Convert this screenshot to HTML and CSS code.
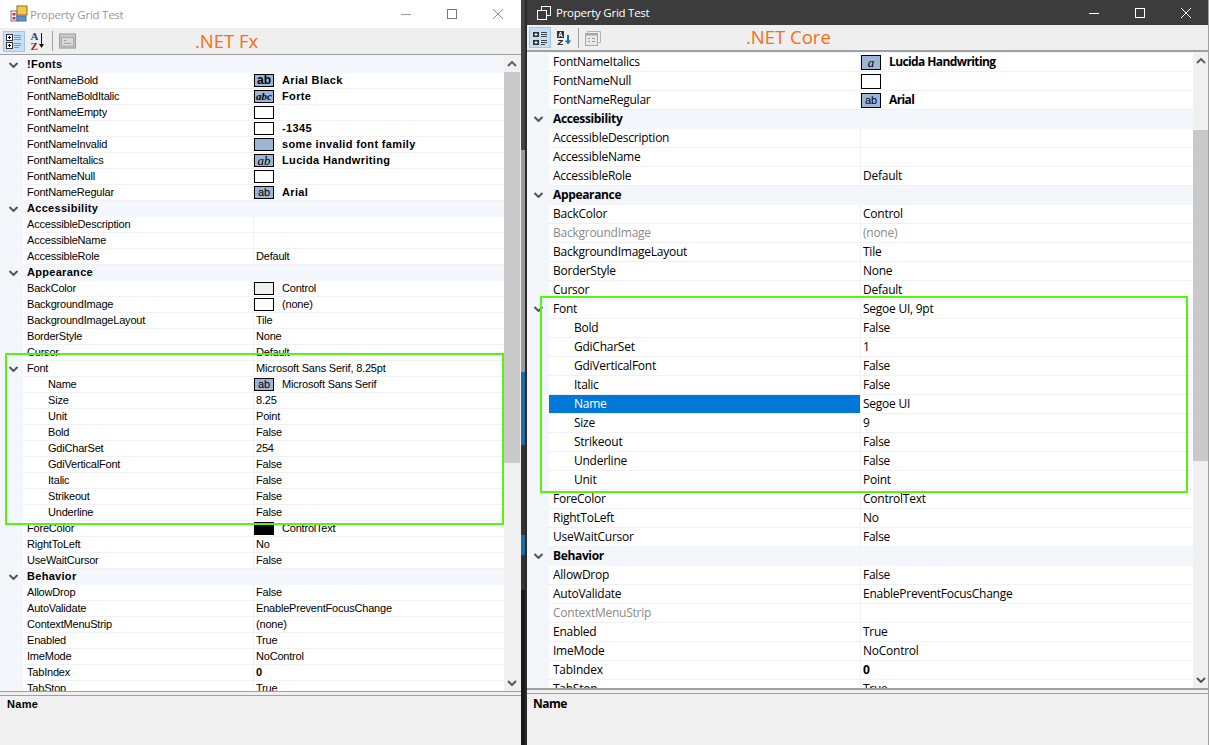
FILE: index.html
```html
<!DOCTYPE html>
<html lang="en">
<head>
<meta charset="UTF-8">
<title>Property Grid Test</title>
<link rel="stylesheet" href="styles.css">
</head>
<body>

<svg class="defs" width="0" height="0">
  <symbol id="chev" viewBox="0 0 10 6"><path d="M1 1l4 4 4-4" fill="none" stroke="#555" stroke-width="2"/></symbol>
  <symbol id="chev-up" viewBox="0 0 10 6"><path d="M1 5l4-4 4 4" fill="none" stroke="#606060" stroke-width="2"/></symbol>
</svg>

<!-- left window -->
<div class="window fx">
  <div class="titlebar">
    <svg class="app-icon" width="18" height="18" viewBox="0 0 18 18">
      <rect x="1" y="6" width="6" height="10" fill="#f4f4f4" stroke="#777"/>
      <rect x="2.500" y="8" width="3" height="2.500" fill="#c43a30"/>
      <rect x="2.500" y="12" width="3" height="2.500" fill="#c43a30"/>
      <rect x="7" y="1" width="10" height="9" fill="#f2c94c" stroke="#8a6d1c"/>
      <rect x="7" y="11" width="9" height="5" fill="#5b8fd6" stroke="#4a6a9c"/>
    </svg>
    <span class="title">Property Grid Test</span>
    <div class="caption">
      <svg width="12" height="12" viewBox="0 0 12 12"><path d="M1 6.500h10" stroke="#999"/></svg>
      <svg width="12" height="12" viewBox="0 0 12 12"><rect x="1.500" y="1.500" width="9" height="9" fill="none" stroke="#777"/></svg>
      <svg width="12" height="12" viewBox="0 0 12 12"><path d="M1 1l10 10M11 1L1 11" stroke="#888"/></svg>
    </div>
  </div>
  <div class="toolbar">
    <span class="tool on">
      <svg width="18" height="18" viewBox="0 0 18 18">
        <rect x="1.500" y="2.500" width="6" height="6" fill="#fff" stroke="#333"/><path d="M3 5.500h3M4.500 4v3" stroke="#000"/>
        <rect x="1.500" y="10.500" width="6" height="6" fill="#fff" stroke="#333"/><path d="M3 13.500h3M4.500 12v3" stroke="#000"/>
        <path d="M9 3.500h7M9 5.500h7M9 7.500h7M9 11.500h7M9 13.500h7M9 15.500h5" stroke="#8a93a0"/>
      </svg>
    </span>
    <span class="tool az">
      <span class="az-letters"><b class="a">A</b><b class="z">Z</b></span>
      <svg width="7" height="18" viewBox="0 0 7 18"><path d="M3.500 1v13" stroke="#111"/><path d="M1 12h5l-2.500 4z" fill="#111"/></svg>
    </span>
    <span class="sep"></span>
    <svg class="pages" width="17" height="16" viewBox="0 0 18 16">
      <rect x="0.500" y="0.500" width="17" height="15" fill="#c9c9c9" stroke="#999"/>
      <rect x="2.500" y="4.500" width="13" height="9" fill="#dcdcdc" stroke="#a5a5a5"/>
      <path d="M5 7.500h3M5 10.500h8" stroke="#999"/>
    </svg>
    <span class="tag">.NET Fx</span>
  </div>
  <div class="body">
    <div class="grid">
      <div class="row cat"><svg class="chev"><use href="#chev"/></svg><span class="name">!Fonts</span></div>
      <div class="row"><span class="name">FontNameBold</span><span class="val strong"><i class="sw blue arial-black">ab</i>Arial Black</span></div>
      <div class="row"><span class="name">FontNameBoldItalic</span><span class="val strong"><i class="sw blue forte">abc</i>Forte</span></div>
      <div class="row"><span class="name">FontNameEmpty</span><span class="val"><i class="sw"></i></span></div>
      <div class="row"><span class="name">FontNameInt</span><span class="val strong"><i class="sw"></i>-1345</span></div>
      <div class="row"><span class="name">FontNameInvalid</span><span class="val strong"><i class="sw blue"></i>some invalid font family</span></div>
      <div class="row"><span class="name">FontNameItalics</span><span class="val strong"><i class="sw blue script">ab</i>Lucida Handwriting</span></div>
      <div class="row"><span class="name">FontNameNull</span><span class="val"><i class="sw"></i></span></div>
      <div class="row"><span class="name">FontNameRegular</span><span class="val strong"><i class="sw blue">ab</i>Arial</span></div>
      <div class="row cat"><svg class="chev"><use href="#chev"/></svg><span class="name">Accessibility</span></div>
      <div class="row"><span class="name">AccessibleDescription</span><span class="val"></span></div>
      <div class="row"><span class="name">AccessibleName</span><span class="val"></span></div>
      <div class="row"><span class="name">AccessibleRole</span><span class="val">Default</span></div>
      <div class="row cat"><svg class="chev"><use href="#chev"/></svg><span class="name">Appearance</span></div>
      <div class="row"><span class="name">BackColor</span><span class="val"><i class="sw control"></i>Control</span></div>
      <div class="row"><span class="name">BackgroundImage</span><span class="val"><i class="sw"></i>(none)</span></div>
      <div class="row"><span class="name">BackgroundImageLayout</span><span class="val">Tile</span></div>
      <div class="row"><span class="name">BorderStyle</span><span class="val">None</span></div>
      <div class="row"><span class="name">Cursor</span><span class="val">Default</span></div>
      <div class="row"><svg class="chev open"><use href="#chev"/></svg><span class="name">Font</span><span class="val">Microsoft Sans Serif, 8.25pt</span></div>
      <div class="row sub"><span class="name">Name</span><span class="val"><i class="sw blue">ab</i>Microsoft Sans Serif</span></div>
      <div class="row sub"><span class="name">Size</span><span class="val">8.25</span></div>
      <div class="row sub"><span class="name">Unit</span><span class="val">Point</span></div>
      <div class="row sub"><span class="name">Bold</span><span class="val">False</span></div>
      <div class="row sub"><span class="name">GdiCharSet</span><span class="val">254</span></div>
      <div class="row sub"><span class="name">GdiVerticalFont</span><span class="val">False</span></div>
      <div class="row sub"><span class="name">Italic</span><span class="val">False</span></div>
      <div class="row sub"><span class="name">Strikeout</span><span class="val">False</span></div>
      <div class="row sub"><span class="name">Underline</span><span class="val">False</span></div>
      <div class="row"><span class="name">ForeColor</span><span class="val"><i class="sw black"></i>ControlText</span></div>
      <div class="row"><span class="name">RightToLeft</span><span class="val">No</span></div>
      <div class="row"><span class="name">UseWaitCursor</span><span class="val">False</span></div>
      <div class="row cat"><svg class="chev"><use href="#chev"/></svg><span class="name">Behavior</span></div>
      <div class="row"><span class="name">AllowDrop</span><span class="val">False</span></div>
      <div class="row"><span class="name">AutoValidate</span><span class="val">EnablePreventFocusChange</span></div>
      <div class="row"><span class="name">ContextMenuStrip</span><span class="val">(none)</span></div>
      <div class="row"><span class="name">Enabled</span><span class="val">True</span></div>
      <div class="row"><span class="name">ImeMode</span><span class="val">NoControl</span></div>
      <div class="row"><span class="name">TabIndex</span><span class="val strong">0</span></div>
      <div class="row"><span class="name">TabStop</span><span class="val">True</span></div>
    </div>
    <div class="scroll">
      <svg class="arrow"><use href="#chev-up"/></svg>
      <div class="thumb"></div>
      <svg class="arrow end"><use href="#chev"/></svg>
    </div>
  </div>
  <div class="gap"></div>
  <div class="help"><b>Name</b></div>
  <div class="mark"></div>
</div>

<div class="divider"></div>

<!-- right window -->
<div class="window core">
  <div class="titlebar">
    <svg class="app-icon" width="16" height="16" viewBox="0 0 16 16">
      <rect x="5.500" y="1.500" width="9" height="9" fill="none" stroke="#fff"/>
      <rect x="1.500" y="5.500" width="9" height="9" fill="#3c3c3c" stroke="#fff"/>
    </svg>
    <span class="title">Property Grid Test</span>
    <div class="caption">
      <svg width="12" height="12" viewBox="0 0 12 12"><path d="M1 6.500h10" stroke="#fff"/></svg>
      <svg width="12" height="12" viewBox="0 0 12 12"><rect x="1.500" y="1.500" width="9" height="9" fill="none" stroke="#fff"/></svg>
      <svg width="12" height="12" viewBox="0 0 12 12"><path d="M1 1l10 10M11 1L1 11" stroke="#fff"/></svg>
    </div>
  </div>
  <div class="toolbar">
    <span class="tool on">
      <svg width="16" height="16" viewBox="0 0 16 16">
        <rect x="1" y="2" width="6" height="5" fill="#333"/><path d="M2.500 4.500h3M4 3v3" stroke="#fff"/>
        <rect x="1" y="10" width="6" height="5" fill="#333"/><path d="M2.500 12.500h3M4 11v3" stroke="#fff"/>
        <path d="M9 2.500h6M9 4.500h6M9 6.500h6M9 10.500h6M9 12.500h6M9 14.500h4" stroke="#444"/>
      </svg>
    </span>
    <span class="tool az">
      <svg width="16" height="16" viewBox="0 0 16 16">
        <rect x="1" y="1" width="7" height="7" fill="#333"/>
        <path d="M2.800 7l1.700-5 1.700 5M3.400 5.500h2.200" fill="none" stroke="#fff"/>
        <path d="M2 10h5v1l-3.500 3H7v1H1.500v-1L5 11H2z" fill="#333"/>
        <path d="M12 5v8" stroke="#1e6fa8" stroke-width="2"/><path d="M8.800 10.500h6.400L12 14.500z" fill="#1e6fa8"/>
      </svg>
    </span>
    <span class="sep"></span>
    <svg class="pages" width="16" height="16" viewBox="0 0 16 16">
      <path d="M2.500 3.500v-2h13v11h-2" fill="none" stroke="#b5b5b5"/>
      <rect x="0.500" y="3.500" width="12" height="12" fill="#e8e8e8" stroke="#a8a8a8"/>
      <path d="M1 3.500h11v2H1z" fill="#a8a8a8"/>
      <path d="M3 8.500h2M7 8.500h3M3 11.500h2M7 11.500h3" stroke="#999"/>
    </svg>
    <span class="tag">.NET Core</span>
  </div>
  <div class="body">
    <div class="grid">
      <div class="row"><span class="name">FontNameItalics</span><span class="val strong"><i class="sw blue script">a</i>Lucida Handwriting</span></div>
      <div class="row"><span class="name">FontNameNull</span><span class="val"><i class="sw"></i></span></div>
      <div class="row"><span class="name">FontNameRegular</span><span class="val strong"><i class="sw blue">ab</i>Arial</span></div>
      <div class="row cat"><svg class="chev"><use href="#chev"/></svg><span class="name">Accessibility</span></div>
      <div class="row"><span class="name">AccessibleDescription</span><span class="val"></span></div>
      <div class="row"><span class="name">AccessibleName</span><span class="val"></span></div>
      <div class="row"><span class="name">AccessibleRole</span><span class="val">Default</span></div>
      <div class="row cat"><svg class="chev"><use href="#chev"/></svg><span class="name">Appearance</span></div>
      <div class="row"><span class="name">BackColor</span><span class="val">Control</span></div>
      <div class="row"><span class="name muted">BackgroundImage</span><span class="val muted">(none)</span></div>
      <div class="row"><span class="name">BackgroundImageLayout</span><span class="val">Tile</span></div>
      <div class="row"><span class="name">BorderStyle</span><span class="val">None</span></div>
      <div class="row"><span class="name">Cursor</span><span class="val">Default</span></div>
      <div class="row"><svg class="chev open"><use href="#chev"/></svg><span class="name">Font</span><span class="val">Segoe UI, 9pt</span></div>
      <div class="row sub"><span class="name">Bold</span><span class="val">False</span></div>
      <div class="row sub"><span class="name">GdiCharSet</span><span class="val">1</span></div>
      <div class="row sub"><span class="name">GdiVerticalFont</span><span class="val">False</span></div>
      <div class="row sub"><span class="name">Italic</span><span class="val">False</span></div>
      <div class="row sub selected"><span class="name">Name</span><span class="val">Segoe UI</span></div>
      <div class="row sub"><span class="name">Size</span><span class="val">9</span></div>
      <div class="row sub"><span class="name">Strikeout</span><span class="val">False</span></div>
      <div class="row sub"><span class="name">Underline</span><span class="val">False</span></div>
      <div class="row sub"><span class="name">Unit</span><span class="val">Point</span></div>
      <div class="row"><span class="name">ForeColor</span><span class="val">ControlText</span></div>
      <div class="row"><span class="name">RightToLeft</span><span class="val">No</span></div>
      <div class="row"><span class="name">UseWaitCursor</span><span class="val">False</span></div>
      <div class="row cat"><svg class="chev"><use href="#chev"/></svg><span class="name">Behavior</span></div>
      <div class="row"><span class="name">AllowDrop</span><span class="val">False</span></div>
      <div class="row"><span class="name">AutoValidate</span><span class="val">EnablePreventFocusChange</span></div>
      <div class="row"><span class="name muted">ContextMenuStrip</span><span class="val"></span></div>
      <div class="row"><span class="name">Enabled</span><span class="val">True</span></div>
      <div class="row"><span class="name">ImeMode</span><span class="val">NoControl</span></div>
      <div class="row"><span class="name">TabIndex</span><span class="val strong">0</span></div>
      <div class="row"><span class="name">TabStop</span><span class="val">True</span></div>
    </div>
    <div class="scroll">
      <svg class="arrow"><use href="#chev-up"/></svg>
      <div class="thumb"></div>
      <svg class="arrow end"><use href="#chev"/></svg>
    </div>
  </div>
  <div class="gap"></div>
  <div class="help"><b>Name</b></div>
  <div class="mark"></div>
</div>

</body>
</html>
```

FILE: styles.css
```css
html, body {
  margin: 0;
  height: 745px;
  overflow: hidden;
}

body {
  display: flex;
  background-color: #f0f0f0;
  color: #000;
}

.defs {
  position: absolute;
}

.window {
  position: relative;
  display: flex;
  flex-direction: column;
  height: 745px;
  overflow: hidden;
}

.fx {
  width: 521px;
  font: 11px "Liberation Sans", Arial, sans-serif;
}

.core {
  width: 682px;
  flex: none;
  font: 12px "Open Sans", "Noto Sans", sans-serif;
  letter-spacing: -0.25px;
  border-right: 1px solid #a0a0a0;
  box-sizing: border-box;
}

.divider {
  width: 6px;
  flex: none;
  /* bit of the desktop showing between the two windows */
  background: linear-gradient(#444 0, #444 150px, #9b9b9b 150px, #9b9b9b 372px, #1d6aa5 372px, #1d6aa5 445px, #333 445px, #333 535px, #1d6aa5 535px, #1d6aa5 555px, #333 555px, #333 590px, #1a1a1a 590px);
  border-right: 2px solid #2a2a2a;
  box-sizing: border-box;
}

/* title bar */
.titlebar {
  display: flex;
  align-items: center;
  flex: none;
}

.fx .titlebar {
  height: 28px;
  padding-left: 10px;
  background-color: #fff;
  color: #999;
  font: 11.5px "Open Sans", sans-serif;
  letter-spacing: -0.25px;
}

.core .titlebar {
  height: 25px;
  padding-left: 9px;
  background-color: #3c3c3c;
  color: #fff;
  font-size: 11.5px;
  letter-spacing: -0.25px;
}

.title {
  margin-left: 2px;
}

.core .title {
  margin-left: 4px;
}

.caption {
  display: flex;
  align-items: center;
  margin-left: auto;
  gap: 34px;
}

.fx .caption {
  margin-right: 17px;
}

.core .caption {
  margin-right: 16px;
}

/* toolbar */
.toolbar {
  display: flex;
  align-items: center;
  flex: none;
  background-color: #efefef;
}

.fx .toolbar {
  height: 26px;
  padding-left: 3px;
  border-bottom: 1px solid #a0a0a0;
}

.core .toolbar {
  height: 27px;
  padding-left: 2px;
  border-bottom: 2px solid #a0a0a0;
  box-sizing: border-box;
}

.tool {
  display: flex;
  align-items: center;
  justify-content: center;
  width: 22px;
  height: 21px;
  box-sizing: border-box;
}

.tool.on {
  background-color: #c4dff6;
  border: 1px solid #9cc8ee;
}

.az {
  margin-left: 2px;
}

.az-letters {
  display: flex;
  flex-direction: column;
  font: bold 11px/10px "Liberation Serif", serif;
}

.az-letters .a {
  color: #23408c;
}

.az-letters .z {
  color: #8c2330;
}

.sep {
  width: 1px;
  height: 20px;
  margin: 0 6px 0 3px;
  background-color: #a0a0a0;
}

.tag {
  color: #ff6a13;
  font: 18.5px "Open Sans", sans-serif;
  letter-spacing: 0;
  margin-top: -2px;
}

.fx .tag {
  margin-left: 119px;
}

.core .tag {
  margin-left: 145px;
}

/* grid */
.body {
  display: flex;
  flex: none;
  overflow: hidden;
}

.fx .body {
  height: 636px;
}

.core .body {
  height: 636px;
  border-bottom: 1px solid #a0a0a0;
}

.grid {
  flex: 1;
  min-width: 0;
  overflow: hidden;
  background-color: #f3f6fb;
}

.fx .grid {
  padding-top: 2px;
}

.core .grid {
  padding-top: 1px;
}

.row {
  position: relative;
  display: flex;
  box-sizing: border-box;
  white-space: nowrap;
}

.fx .row {
  height: 16px;
  line-height: 15px;
  padding-left: 23px;
}

.core .row {
  height: 19px;
  line-height: 18px;
  padding-left: 22px;
}

.name, .val {
  display: flex;
  align-items: center;
  background-color: #fff;
  border-bottom: 1px solid #f0f0f5;
  box-sizing: border-box;
  overflow: hidden;
}

.name {
  padding-left: 4px;
}

.fx .name {
  width: 230px;
  letter-spacing: -0.2px;
}

.core .name {
  width: 311px;
}

.val {
  flex: 1;
  min-width: 0;
  border-left: 1px solid #f0f0f5;
  padding-left: 2px;
}

.fx .val {
  letter-spacing: -0.2px;
}

.sub .name {
  padding-left: 25px;
}

.strong {
  font-weight: bold;
}

.fx .strong {
  letter-spacing: 0.35px;
}

.core .strong {
  letter-spacing: -0.6px;
}

.muted {
  color: #8a8a8a;
}

.row.cat {
  background-color: #f3f6fb;
  font-weight: bold;
}

.cat .name {
  background: none;
  border-bottom-color: transparent;
}

.fx .cat .name {
  letter-spacing: 0.3px;
}

.core .cat .name {
  letter-spacing: -0.35px;
}

.selected .name {
  background-color: #0078d7;
  color: #fff;
}

.chev {
  position: absolute;
  width: 11px;
  height: 6px;
  top: 5px;
}

.fx .chev {
  left: 8px;
}

.core .chev {
  left: 6px;
  top: 6px;
}

/* colour swatch in front of a font name */
.sw {
  display: block;
  flex: none;
  width: 20px;
  height: 13px;
  margin: 0 8px 0 -2px;
  border: 1px solid #000;
  box-sizing: border-box;
  background-color: #fff;
  font: 11px/11px "Liberation Sans", sans-serif;
  letter-spacing: 0;
  text-align: center;
  overflow: hidden;
}

.core .sw {
  height: 15px;
  line-height: 13px;
}

.sw.blue {
  background-color: #9db6d6;
}

.sw.control {
  background-color: #f0f0f0;
}

.sw.black {
  background-color: #000;
}

.sw.arial-black {
  font-weight: 900;
  font-size: 12px;
}

.sw.forte {
  font-family: "Liberation Serif", serif;
  font-style: italic;
  font-weight: bold;
}

.sw.script {
  font-family: "Liberation Serif", serif;
  font-style: italic;
  font-size: 13px;
}

/* scrollbar */
.scroll {
  position: relative;
  flex: none;
  width: 17px;
  background-color: #f0f0f0;
}

.core .scroll {
  width: 15px;
}

.arrow {
  position: absolute;
  left: 3px;
  top: 6px;
  width: 10px;
  height: 6px;
}

.arrow.end {
  top: auto;
  bottom: 5px;
}

.thumb {
  position: absolute;
  left: 0;
  right: 1px;
  background-color: #c9c9c9;
}

.fx .thumb {
  top: 17px;
  height: 391px;
}

.core .thumb {
  top: 78px;
  height: 331px;
  right: 0;
}

/* description pane */
.gap {
  flex: none;
  height: 3px;
  border-top: 1px solid #a0a0a0;
}

.help {
  flex: 1;
  border-top: 1px solid #a0a0a0;
  padding: 4px 7px;
}

.fx .help {
  padding-top: 2px;
  letter-spacing: 0.3px;
}

.core .help {
  padding: 1px 6px;
  letter-spacing: -0.5px;
}

/* green highlight drawn over the screenshot */
.mark {
  position: absolute;
  border: 2px solid #55f511;
  box-sizing: border-box;
  pointer-events: none;
}

.fx .mark {
  left: 5px;
  top: 353px;
  width: 499px;
  height: 172px;
}

.core .mark {
  left: 13px;
  top: 296px;
  width: 648px;
  height: 197px;
}
```
